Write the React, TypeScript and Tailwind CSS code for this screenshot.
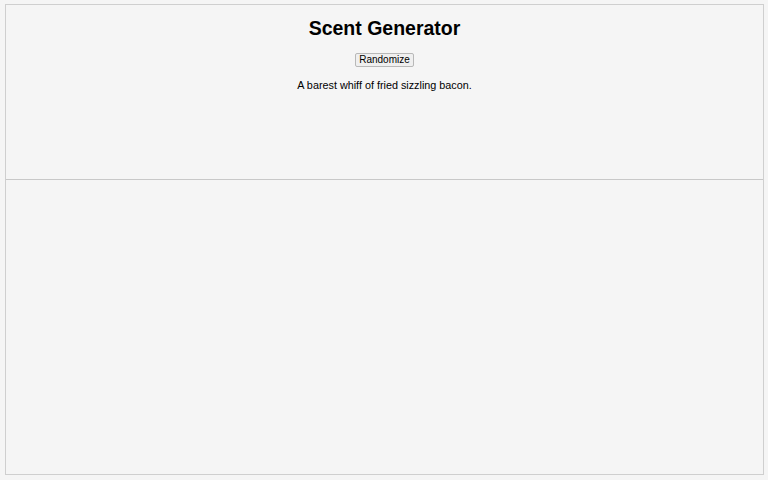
export default function App() {
  return (
    <div
      className="w-[768px] h-[480px] bg-[#f5f5f5] pt-[4px] pl-[5px]"
      style={{ fontFamily: '"Liberation Sans", Arial, sans-serif' }}
    >
      <div className="w-[759px] h-[471px] border border-[#cfcfcf] flex flex-col">
        <div className="h-[175px] border-b border-[#c8c8c8] flex flex-col items-center pt-[11px]">
          <h1 className="text-[19.5px] leading-[24px] font-bold text-black">Scent Generator</h1>
          <button className="mt-[13px] h-[14px] px-[3px] text-[10px] leading-[12px] text-black bg-[#efefef] border border-[#b8b8b8] rounded-[2px]">
            Randomize
          </button>
          <p className="mt-[11px] text-[10.8px] leading-[14px] text-black">A barest whiff of fried sizzling bacon.</p>
        </div>
        <div className="flex-1" />
      </div>
    </div>
  );
}
